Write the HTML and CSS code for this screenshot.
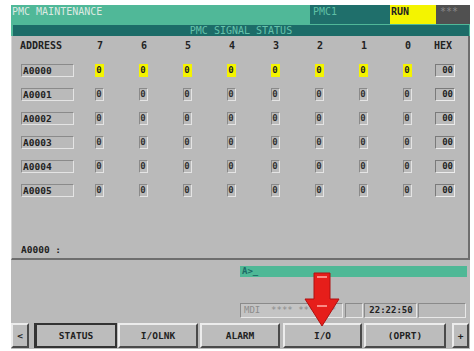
FILE: index.html
```html
<!DOCTYPE html>
<html>
<head>
<meta charset="utf-8">
<link rel="stylesheet" href="styles.css">
</head>
<body>
<div class="screen">
  <div class="top">
    <div class="hdr">
      <span class="hdr-title">PMC MAINTENANCE</span>
      <span class="hdr-pmc">PMC1</span>
      <span class="hdr-run">RUN</span>
      <span class="hdr-star">***</span>
    </div>
    <div class="title">PMC SIGNAL STATUS</div>
  </div>
  <div class="panel">
    <div class="row head">
      <span class="addr-h">ADDRESS</span>
      <span class="c">7</span><span class="c">6</span><span class="c">5</span><span class="c">4</span>
      <span class="c">3</span><span class="c">2</span><span class="c">1</span><span class="c">0</span>
      <span class="c">HEX</span>
    </div>
    <div class="row">
      <span class="addr">A0000</span>
      <span class="c"><b class="bit sel">0</b></span><span class="c"><b class="bit sel">0</b></span><span class="c"><b class="bit sel">0</b></span><span class="c"><b class="bit sel">0</b></span>
      <span class="c"><b class="bit sel">0</b></span><span class="c"><b class="bit sel">0</b></span><span class="c"><b class="bit sel">0</b></span><span class="c"><b class="bit sel">0</b></span>
      <span class="c"><b class="hex">00</b></span>
    </div>
    <div class="row">
      <span class="addr">A0001</span>
      <span class="c"><b class="bit">0</b></span><span class="c"><b class="bit">0</b></span><span class="c"><b class="bit">0</b></span><span class="c"><b class="bit">0</b></span>
      <span class="c"><b class="bit">0</b></span><span class="c"><b class="bit">0</b></span><span class="c"><b class="bit">0</b></span><span class="c"><b class="bit">0</b></span>
      <span class="c"><b class="hex">00</b></span>
    </div>
    <div class="row">
      <span class="addr">A0002</span>
      <span class="c"><b class="bit">0</b></span><span class="c"><b class="bit">0</b></span><span class="c"><b class="bit">0</b></span><span class="c"><b class="bit">0</b></span>
      <span class="c"><b class="bit">0</b></span><span class="c"><b class="bit">0</b></span><span class="c"><b class="bit">0</b></span><span class="c"><b class="bit">0</b></span>
      <span class="c"><b class="hex">00</b></span>
    </div>
    <div class="row">
      <span class="addr">A0003</span>
      <span class="c"><b class="bit">0</b></span><span class="c"><b class="bit">0</b></span><span class="c"><b class="bit">0</b></span><span class="c"><b class="bit">0</b></span>
      <span class="c"><b class="bit">0</b></span><span class="c"><b class="bit">0</b></span><span class="c"><b class="bit">0</b></span><span class="c"><b class="bit">0</b></span>
      <span class="c"><b class="hex">00</b></span>
    </div>
    <div class="row">
      <span class="addr">A0004</span>
      <span class="c"><b class="bit">0</b></span><span class="c"><b class="bit">0</b></span><span class="c"><b class="bit">0</b></span><span class="c"><b class="bit">0</b></span>
      <span class="c"><b class="bit">0</b></span><span class="c"><b class="bit">0</b></span><span class="c"><b class="bit">0</b></span><span class="c"><b class="bit">0</b></span>
      <span class="c"><b class="hex">00</b></span>
    </div>
    <div class="row">
      <span class="addr">A0005</span>
      <span class="c"><b class="bit">0</b></span><span class="c"><b class="bit">0</b></span><span class="c"><b class="bit">0</b></span><span class="c"><b class="bit">0</b></span>
      <span class="c"><b class="bit">0</b></span><span class="c"><b class="bit">0</b></span><span class="c"><b class="bit">0</b></span><span class="c"><b class="bit">0</b></span>
      <span class="c"><b class="hex">00</b></span>
    </div>
    <div class="foot">A0000 :</div>
  </div>
  <div class="lower">
    <div class="input">A&gt;_</div>
    <div class="status">
      <span class="sbox s-mdi">MDI &nbsp;**** *** ***</span>
      <span class="sbox s-e1"></span>
      <span class="sbox s-time">22:22:50</span>
      <span class="sbox s-e2"></span>
    </div>
  </div>
  <div class="keys">
    <span class="key k-l">&lt;</span>
    <span class="key k-status">STATUS</span>
    <span class="key k-iolnk">I/OLNK</span>
    <span class="key k-alarm">ALARM</span>
    <span class="key k-io">I/O</span>
    <span class="key k-oprt">(OPRT)</span>
    <span class="key k-r">+</span>
  </div>
  <svg class="arrow" width="40" height="56" viewBox="0 0 40 56">
    <path d="M11 1 H27 V27 H36 L19 54 L2 27 H11 Z" fill="#e61e1a" stroke="#b01010" stroke-width="1"/>
    <path d="M14 5 H24" stroke="#ffb0a8" stroke-width="1.5"/>
    <path d="M14 34 H24" stroke="#ffb0a8" stroke-width="1.5"/>
  </svg>
</div>
</body>
</html>
```
FILE: styles.css
```css
html, body {
  margin: 0;
  padding: 0;
  background: #ffffff;
}
body {
  font-family: "DejaVu Sans Mono", "Liberation Mono", monospace;
  font-size: 10px;
  font-weight: bold;
  color: #222;
}
.screen {
  position: relative;
  margin: 5px 0 0 11px;
  width: 459px;
  height: 344px;
  background: #bababa;
  display: flex;
  flex-direction: column;
}
.top {
  background: #50b898;
  height: 31px;
  display: flex;
  flex-direction: column;
}
.hdr {
  height: 19px;
  display: flex;
  align-items: stretch;
  line-height: 19px;
  font-weight: normal;
}
.hdr-title {
  flex: 1;
  padding-left: 1px;
  color: #dce9e2;
  line-height: 14px;
}
.hdr-pmc {
  width: 77px;
  padding-left: 3px;
  background: #1f6f6b;
  color: #5fc0a6;
  line-height: 14px;
}
.hdr-run {
  width: 45px;
  padding-left: 1px;
  background: #f4f400;
  color: #222;
  font-weight: bold;
  line-height: 14px;
}
.hdr-star {
  width: 30px;
  padding-left: 4px;
  background: #505050;
  color: #8a8a8a;
  line-height: 14px;
}
.title {
  margin: 1px 1px 0 2px;
  height: 11px;
  line-height: 11px;
  background: #1c6c68;
  color: #66c3ac;
  text-align: center;
  font-weight: normal;
}
.panel {
  height: 222px;
  border-left: 1px solid #d6d6d6;
  border-right: 2px solid #6e6e6e;
  border-bottom: 2px solid #6e6e6e;
  display: flex;
  flex-direction: column;
  padding-left: 9px;
}
.row {
  display: grid;
  grid-template-columns: 57px repeat(8, 44px) 26px;
  height: 24px;
  align-items: center;
}
.row.head {
  height: 18px;
  margin-bottom: 4px;
}
.addr-h {
  margin-left: -1px;
}
.c {
  text-align: center;
  display: flex;
  justify-content: center;
}
.addr {
  width: 50px;
  height: 11px;
  line-height: 11px;
  padding-left: 1px;
  border-top: 1px solid #8a8a8a;
  border-left: 1px solid #8a8a8a;
  border-bottom: 1px solid #e4e4e4;
  border-right: 1px solid #e4e4e4;
  font-size: 9.5px;
}
.bit {
  display: block;
  width: 7px;
  height: 11px;
  line-height: 11px;
  font-size: 9px;
  text-align: center;
  border-top: 1px solid #8a8a8a;
  border-left: 1px solid #8a8a8a;
  border-bottom: 1px solid #e4e4e4;
  border-right: 1px solid #e4e4e4;
  color: #303030;
  margin-left: -2px;
}
.bit.sel {
  background: #f4f400;
  border-color: #f4f400;
  color: #222;
}
.hex {
  display: block;
  width: 17px;
  height: 11px;
  line-height: 11px;
  font-size: 9px;
  text-align: right;
  padding-right: 1px;
  border-top: 1px solid #7a7a7a;
  border-left: 1px solid #7a7a7a;
  border-bottom: 1px solid #ececec;
  border-right: 1px solid #ececec;
  margin-left: 4px;
}
.foot {
  margin-top: auto;
  height: 14px;
  line-height: 14px;
  margin-bottom: 1px;
  font-size: 9.5px;
}
.lower {
  height: 63px;
  display: flex;
  flex-direction: column;
  padding-left: 229px;
  padding-right: 3px;
}
.input {
  margin-top: 6px;
  height: 11px;
  line-height: 11px;
  background: #4fb896;
  color: #1d6a66;
  padding-left: 2px;
  font-size: 9px;
}
.status {
  margin-top: 26px;
  height: 15px;
  display: flex;
  gap: 1px;
}
.sbox {
  height: 13px;
  line-height: 13px;
  border-top: 1px solid #8a8a8a;
  border-left: 1px solid #8a8a8a;
  border-bottom: 1px solid #e8e8e8;
  border-right: 1px solid #e8e8e8;
  font-size: 9px;
}
.s-mdi {
  width: 98px;
  padding-left: 3px;
  color: #8c8c8c;
  font-weight: normal;
  background: #c4c4c4;
}
.s-e1 {
  width: 16px;
  margin-left: 1px;
}
.s-time {
  width: 50px;
  padding-left: 1px;
  text-align: center;
  color: #222;
}
.s-e2 {
  width: 46px;
}
.keys {
  height: 25px;
  display: flex;
}
.key {
  box-sizing: border-box;
  height: 25px;
  line-height: 21px;
  text-align: center;
  border-top: 2px solid #ececec;
  border-left: 2px solid #ececec;
  border-bottom: 2px solid #4a4a4a;
  border-right: 2px solid #4a4a4a;
  background: #bcbcbc;
  font-size: 9.5px;
}
.k-l { width: 18px; }
.k-status {
  width: 83px;
  margin-left: 5px;
  border: 2px solid #333;
  border-left-width: 3px;
}
.k-iolnk { width: 80px; margin-left: 1px; }
.k-alarm { width: 80px; margin-left: 2px; }
.k-io { width: 79px; margin-left: 3px; }
.k-oprt { width: 82px; margin-left: 2px; }
.k-r { width: 17px; margin-left: 6px; }
.arrow {
  position: absolute;
  left: 292px;
  top: 267px;
}
```
